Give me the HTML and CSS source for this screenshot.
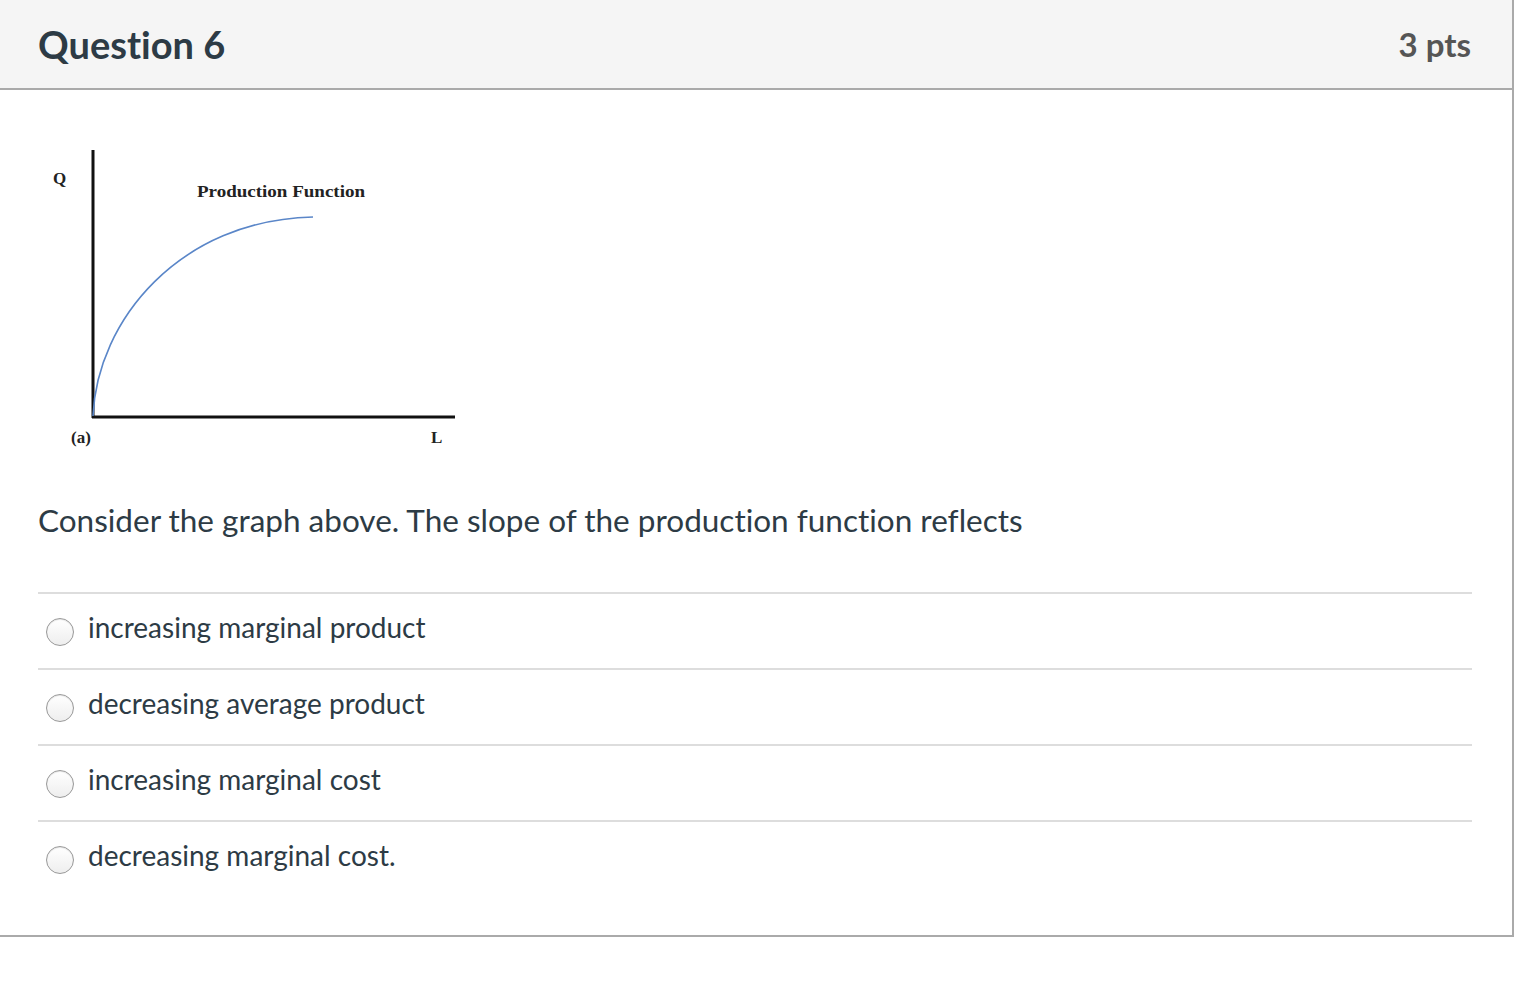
FILE: index.html
```html
<!DOCTYPE html>
<html lang="en">
<head>
    <meta charset="UTF-8">
    <title>Question 6</title>
    <link rel="stylesheet" href="styles.css">
</head>
<body>

<div class="question">
    <div class="header">
        <span class="title">Question 6</span>
        <span class="points">3 pts</span>
    </div>

    <div class="content">
        <!-- graph -->
        <svg class="graph" width="440" height="320" viewBox="0 0 440 320">
            <line x1="53" y1="10" x2="53" y2="278" stroke="#111" stroke-width="3"/>
            <line x1="52" y1="277" x2="415" y2="277" stroke="#111" stroke-width="3"/>
            <path d="M53,276 C57,180 140,80 273,77" fill="none" stroke="#5a86c8" stroke-width="1.6"/>
            <text x="13" y="44" class="lbl">Q</text>
            <text x="157" y="57" class="lbl" textLength="168" lengthAdjust="spacingAndGlyphs">Production Function</text>
            <text x="31" y="303" class="lbl">(a)</text>
            <text x="391" y="303" class="lbl">L</text>
        </svg>

        <p class="prompt">Consider the graph above. The slope of the production function reflects</p>

        <div class="answers">
            <label class="answer"><span class="radio"></span>increasing marginal product</label>
            <label class="answer"><span class="radio"></span>decreasing average product</label>
            <label class="answer"><span class="radio"></span>increasing marginal cost</label>
            <label class="answer"><span class="radio"></span>decreasing marginal cost.</label>
        </div>
    </div>
</div>

</body>
</html>
```

FILE: styles.css
```css
body {
    margin: 0;
    font-family: 'Lato', 'Liberation Sans', sans-serif;
    font-variant-ligatures: none;
    color: #2d3b45;
    background-color: white;
}
.question {
    width: 1512px;
    border-right: 2px solid #aaa;
    border-bottom: 2px solid #aaa;
    padding-bottom: 39px;
}
.header {
    height: 88px;
    display: flex;
    align-items: center;
    justify-content: space-between;
    padding: 0 41px 0 38px;
    background-color: #f5f5f5;
    border-bottom: 2px solid #aaa;
}
.title {
    font-size: 38px;
    font-weight: bold;
}
.points {
    font-size: 33px;
    font-weight: bold;
    color: #555;
}
.content {
    padding: 0 40px 0 38px;
}
.graph {
    display: block;
    margin: 50px 0 0 2px;
}
.lbl {
    font-family: 'Liberation Serif', serif;
    font-weight: bold;
    font-size: 17px;
    fill: #222;
}
.prompt {
    font-size: 31.5px;
    margin: 38px 0 0 0;
    line-height: 44px;
}
.answers {
    margin-top: 50px;
}
.answer {
    display: flex;
    align-items: center;
    height: 66px;
    padding-bottom: 8px;
    border-top: 2px solid #ddd;
    font-size: 28px;
}
.radio {
    width: 26px;
    height: 26px;
    border: 1px solid #999;
    border-radius: 50%;
    margin: 10px 14px 0 8px;
    background: linear-gradient(#fff, #eee);
    box-shadow: inset 0 1px 1px rgba(0, 0, 0, 0.1);
}
```
